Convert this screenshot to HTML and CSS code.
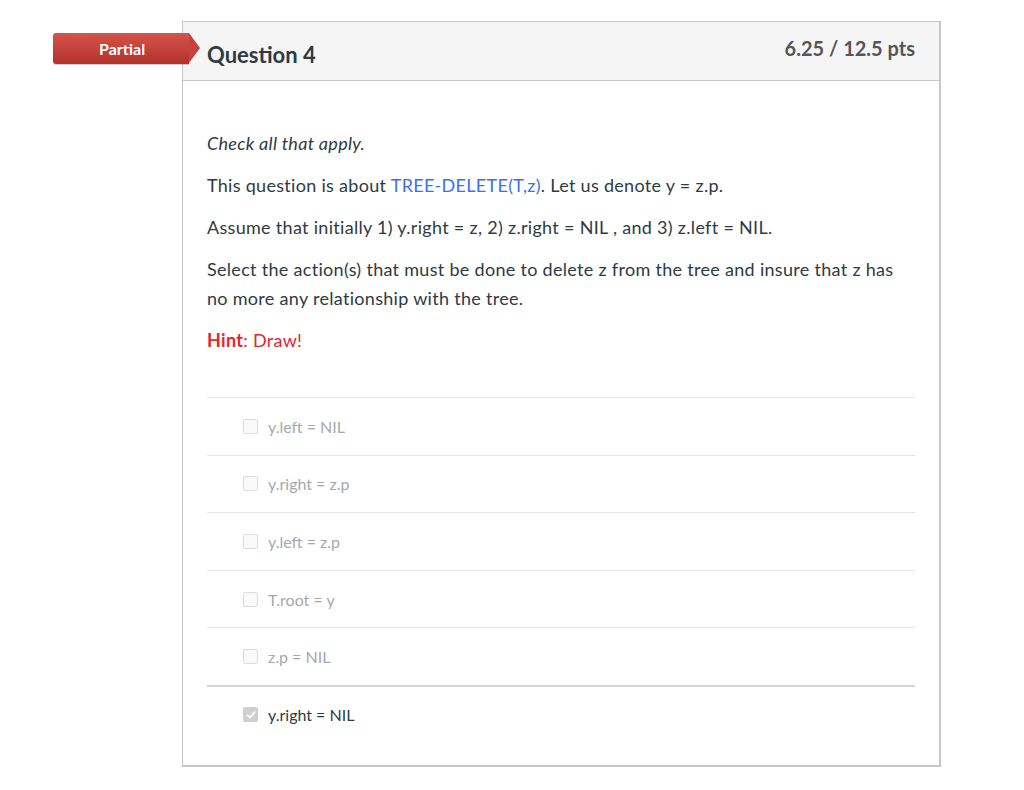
FILE: index.html
```html
<!DOCTYPE html>
<html>
<head>
<meta charset="utf-8">
<link rel="stylesheet" href="styles.css">
</head>
<body>
<div class="page">
  <div class="badge">Partial</div>
  <div class="card">
    <div class="card-header">
      <div class="q-title">Question 4</div>
      <div class="q-pts">6.25 / 12.5 pts</div>
    </div>
    <div class="card-body">
      <p class="em">Check all that apply.</p>
      <p>This question is about <span class="blue">TREE-DELETE(T,z)</span>. Let us denote y = z.p.</p>
      <p>Assume that initially 1) y.right = z, 2) z.right = NIL , and 3) z.left = NIL.</p>
      <p>Select the action(s) that must be done to delete z from the tree and insure that z has no more any relationship with the tree.</p>
      <p class="hint"><b>Hint</b>: Draw!</p>
      <div class="answers">
        <div class="answer"><span class="cb"></span><span class="label">y.left = NIL</span></div>
        <div class="answer"><span class="cb"></span><span class="label">y.right = z.p</span></div>
        <div class="answer"><span class="cb"></span><span class="label">y.left = z.p</span></div>
        <div class="answer"><span class="cb"></span><span class="label">T.root = y</span></div>
        <div class="answer"><span class="cb"></span><span class="label">z.p = NIL</span></div>
        <div class="answer selected"><span class="cb checked"><svg width="12" height="12" viewBox="0 0 12 12"><path d="M2.5 6.2 L5 8.6 L9.6 3.2" fill="none" stroke="#fff" stroke-width="1.8" stroke-linecap="round" stroke-linejoin="round"/></svg></span><span class="label">y.right = NIL</span></div>
      </div>
    </div>
  </div>
</div>
</body>
</html>
```

FILE: styles.css
```css
html, body {
  margin: 0;
  padding: 0;
  background: #fff;
}
body {
  font-family: Lato, "Open Sans", sans-serif;
  color: #2d3b45;
}
.page {
  position: relative;
  padding: 21px 0 0 182px;
}
.badge {
  position: absolute;
  left: 53px;
  top: 33px;
  width: 136px;
  height: 31px;
  background: linear-gradient(#d4534a, #b3312b);
  color: #fff;
  font-weight: bold;
  font-size: 16px;
  line-height: 31px;
  padding-left: 46px;
  box-sizing: border-box;
  border-radius: 3px 0 0 3px;
  box-shadow: 0 1px 1px rgba(0,0,0,0.2);
  z-index: 2;
}
.badge::after {
  content: "";
  position: absolute;
  right: -11px;
  top: 0;
  width: 0;
  height: 0;
  border-top: 15.5px solid transparent;
  border-bottom: 15.5px solid transparent;
  border-left: 11px solid #c4423b;
}
.card {
  width: 759px;
  border: 1px solid #c6c6c6;
  border-width: 1px 2px 2px 1px;
  box-sizing: border-box;
  height: 746px;
}
.card-header {
  background: #f5f5f5;
  border-bottom: 1px solid #c6c6c6;
  height: 59px;
  display: flex;
  justify-content: space-between;
  padding: 0 24px;
  box-sizing: border-box;
}
.q-title {
  font-size: 22px;
  font-weight: bold;
  color: #2d3b45;
  padding-top: 19px;
}
.q-pts {
  font-size: 20px;
  font-weight: bold;
  color: #555;
  padding-top: 14px;
}
.card-body {
  padding: 48px 24px 0 24px;
}
.card-body p {
  font-size: 18px;
  letter-spacing: 0.3px;
  line-height: 29px;
  margin: 0 0 13px 0;
}
.em { font-style: italic; }
.blue { color: #3d6ef5; }
.hint { color: #e8242a; }
.hint b { font-weight: bold; }
.answers {
  margin-top: 42px;
}
.answer {
  border-top: 1px solid #e6e6e6;
  height: 57.6px;
  display: flex;
  align-items: center;
  padding-left: 36px;
  box-sizing: border-box;
}
.answer.selected {
  border-top: 2px solid #d6d6d6;
}
.cb {
  width: 13px;
  height: 13px;
  border: 1px solid #dcdcdc;
  border-radius: 2px;
  background: #fafafa;
  margin-right: 10px;
  display: flex;
  align-items: center;
  justify-content: center;
}
.cb.checked {
  background: #cfcfcf;
  border-color: #cfcfcf;
}
.label {
  font-size: 16px;
  color: #a4a9ad;
}
.selected .label {
  color: #2d3b45;
}
```
